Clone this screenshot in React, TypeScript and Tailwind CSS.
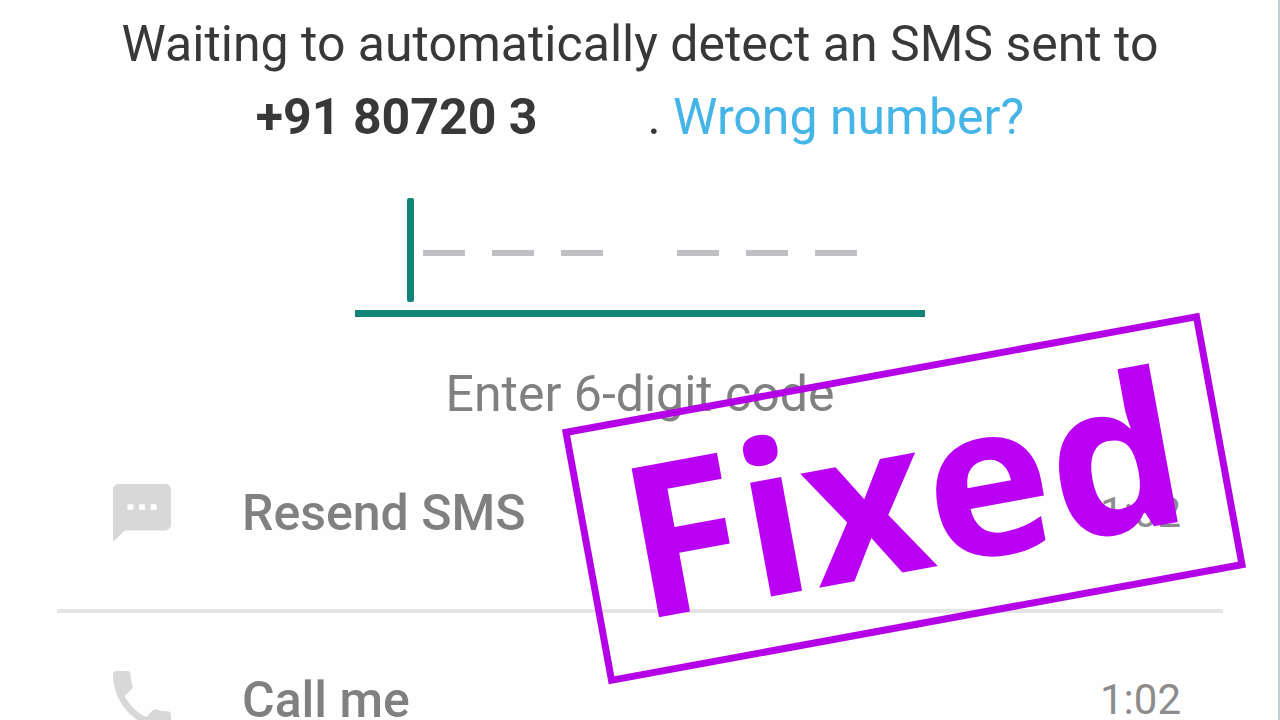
import { useState } from "react";
import type { ReactNode } from "react";

function SmsIcon() {
  return (
    <svg viewBox="2 2 20 20" aria-hidden="true" className="size-[58px] fill-[#d8d8d8]">
      <path d="M20 2H4c-1.1 0-1.99.9-1.99 2L2 22l4-4h14c1.1 0 2-.9 2-2V4c0-1.1-.9-2-2-2zM9 11H7V9h2v2zm4 0h-2V9h2v2zm4 0h-2V9h2v2z" />
    </svg>
  );
}

function PhoneIcon() {
  return (
    <svg viewBox="3 3 18 18" aria-hidden="true" className="size-[58px] fill-[#d8d8d8]">
      <path d="M6.62 10.79c1.44 2.83 3.76 5.14 6.59 6.59l2.2-2.2c.27-.27.67-.36 1.02-.24 1.12.37 2.33.57 3.57.57.55 0 1 .45 1 1V20c0 .55-.45 1-1 1-9.39 0-17-7.61-17-17 0-.55.45-1 1-1h3.5c.55 0 1 .45 1 1 0 1.25.2 2.45.57 3.57.11.35.03.74-.25 1.02l-2.2 2.2z" />
    </svg>
  );
}

function ActionRow({ icon, label, time }: { icon: ReactNode; label: string; time: string }) {
  return (
    <li className="border-b-4 border-[#e4e4e4] pb-[9px]">
      <button type="button" className="flex h-[174px] w-full items-center pr-[42px] pl-14 text-left">
        {icon}
        <span className="ml-[71px] flex-1 text-[50px] leading-[58px] font-medium text-[#808080]">{label}</span>
        <span className="text-[42px] leading-[58px] text-[#8c8c8c]">{time}</span>
      </button>
    </li>
  );
}

function Dashes() {
  return (
    <span className="flex gap-[27px]">
      <span className="h-1.5 w-[42px] bg-[#c0c0c4]" />
      <span className="h-1.5 w-[42px] bg-[#c0c0c4]" />
      <span className="h-1.5 w-[42px] bg-[#c0c0c4]" />
    </span>
  );
}

function CodeField() {
  const [code, setCode] = useState("");
  return (
    <div className="mx-auto w-full max-w-[570px]">
      <div className="relative flex h-[119px] items-start border-b-[7px] border-[#128577] pl-[52px]">
        {code === "" && (
          <div aria-hidden="true" className="flex h-[104px] items-center">
            <span className="mr-[9px] h-full w-[7px] rounded-xs bg-[#128577]" />
            <span className="flex gap-[74px] pt-1.5">
              <Dashes />
              <Dashes />
            </span>
          </div>
        )}
        <input
          id="code"
          inputMode="numeric"
          maxLength={6}
          value={code}
          onChange={(e) => setCode(e.target.value)}
          className="absolute inset-0 bg-transparent px-[52px] text-[64px] tracking-widest text-[#383838] caret-[#128577] outline-none"
        />
      </div>
      <label htmlFor="code" className="mt-[48px] block text-center text-[50px] leading-[58px] text-[#808080]">
        Enter 6-digit code
      </label>
    </div>
  );
}

export default function App() {
  return (
    <main className="relative h-screen overflow-hidden border-r-2 border-[#c3ced1] bg-[#fefefe] pl-0.5 font-['Roboto',sans-serif]">
      <p className="pt-2 text-center text-[50px] leading-[73px] text-[#383838]">
        Waiting to automatically detect an SMS sent to
        <br />
        <b className="mr-[110px] font-bold">+91 80720 3</b>.{" "}
        <a href="#number" className="text-[#45b5e8]">
          Wrong number?
        </a>
      </p>
      <div className="mt-11">
        <CodeField />
      </div>
      <ul className="mx-[55px] pt-[3px]">
        <ActionRow icon={<SmsIcon />} label="Resend SMS" time="1:02" />
        <ActionRow icon={<PhoneIcon />} label="Call me" time="1:02" />
      </ul>
      <div className="absolute top-[369px] left-[580px] flex h-[259px] w-[648px] rotate-[-10.4deg] items-center justify-center border-[7px] border-[#b400e6] pb-5 font-['Open_Sans',sans-serif] text-[212px] leading-none font-bold text-[#b900f4]">
        Fixed
      </div>
    </main>
  );
}
